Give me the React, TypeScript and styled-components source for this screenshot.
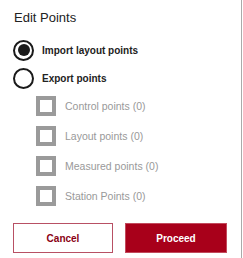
import React from 'react';
import styled, { createGlobalStyle } from 'styled-components';

const GlobalStyle = createGlobalStyle`
  html, body {
    margin: 0;
    padding: 0;
    background: #ffffff;
    font-family: "Liberation Sans", Arial, sans-serif;
  }
`;

const Panel = styled.div`
  box-sizing: border-box;
  width: 242px;
  height: 258px;
  border-right: 1px solid #aaaaaa;
  padding: 10px 0 0 13px;
  display: flex;
  flex-direction: column;
`;

const Title = styled.div`
  font-size: 13px;
  line-height: 16px;
  color: #222222;
  padding-left: 1px;
  margin-bottom: 10px;
`;

const RadioRow = styled.label`
  display: flex;
  align-items: center;
  height: 28px;
  gap: 8px;
`;

const RadioCircle = styled.span<{ $checked?: boolean }>`
  box-sizing: border-box;
  width: 21px;
  height: 21px;
  border-radius: 50%;
  border: 2px solid #1a1a1a;
  display: flex;
  align-items: center;
  justify-content: center;

  &::after {
    content: '';
    width: 12px;
    height: 12px;
    border-radius: 50%;
    background: #1a1a1a;
    display: ${(p) => (p.$checked ? 'block' : 'none')};
  }
`;

const RadioLabel = styled.span`
  font-size: 10px;
  font-weight: bold;
  color: #222222;
`;

const CheckList = styled.div`
  display: flex;
  flex-direction: column;
  gap: 10px;
  padding-left: 23px;
  margin-top: 4px;
`;

const CheckRow = styled.label`
  display: flex;
  align-items: center;
  gap: 9px;
  height: 20px;
`;

const CheckBox = styled.span`
  box-sizing: border-box;
  width: 20px;
  height: 20px;
  border: 4px solid #9a9a9a;
  background: #ffffff;
`;

const CheckLabel = styled.span`
  font-size: 10.5px;
  color: #999999;
`;

const ButtonRow = styled.div`
  display: flex;
  gap: 12px;
  margin-top: 17px;
`;

const Button = styled.button<{ $primary?: boolean }>`
  box-sizing: border-box;
  width: ${(p) => (p.$primary ? '102px' : '100px')};
  height: 30px;
  font-family: "Liberation Sans", Arial, sans-serif;
  font-size: 10px;
  font-weight: bold;
  border-radius: 0;
  cursor: pointer;
  border: 1px solid ${(p) => (p.$primary ? '#c24a5c' : '#b85064')};
  background: ${(p) => (p.$primary ? '#a8001a' : '#ffffff')};
  color: ${(p) => (p.$primary ? '#ffffff' : '#8a0014')};
`;

const checks = [
  'Control points (0)',
  'Layout points (0)',
  'Measured points (0)',
  'Station Points (0)',
];

export default function App() {
  return (
    <>
      <GlobalStyle />
      <Panel>
        <Title>Edit Points</Title>
        <RadioRow>
          <RadioCircle $checked />
          <RadioLabel>Import layout points</RadioLabel>
        </RadioRow>
        <RadioRow>
          <RadioCircle />
          <RadioLabel>Export points</RadioLabel>
        </RadioRow>
        <CheckList>
          {checks.map((c) => (
            <CheckRow key={c}>
              <CheckBox />
              <CheckLabel>{c}</CheckLabel>
            </CheckRow>
          ))}
        </CheckList>
        <ButtonRow>
          <Button>Cancel</Button>
          <Button $primary>Proceed</Button>
        </ButtonRow>
      </Panel>
    </>
  );
}
